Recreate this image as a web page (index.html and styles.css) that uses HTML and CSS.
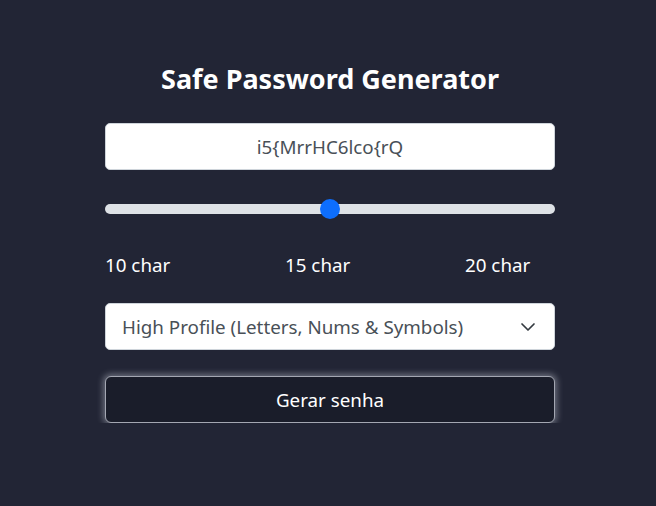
FILE: index.html
```html
<!DOCTYPE html>
<html lang="pt">
<head>
<meta charset="utf-8">
<title>Safe Password Generator</title>
<link rel="stylesheet" href="styles.css">
</head>
<body>
<main class="app">
  <h1 class="title">Safe Password Generator</h1>
  <input class="field password" type="text" value="i5{MrrHC6lco{rQ" readonly>
  <input class="range" type="range" min="10" max="20" value="15">
  <div class="ticks">
    <span>10 char</span>
    <span>15 char</span>
    <span>20 char</span>
  </div>
  <div class="select-wrap">
    <select class="field select">
      <option>High Profile (Letters, Nums &amp; Symbols)</option>
      <option>Medium Profile (Letters &amp; Nums)</option>
      <option>Low Profile (Letters)</option>
    </select>
    <svg class="chevron" width="16" height="16" viewBox="0 0 16 16" aria-hidden="true"><path d="m2 5 6 6 6-6" fill="none" stroke="#343a40" stroke-width="1.7" stroke-linecap="round" stroke-linejoin="round"/></svg>
  </div>
  <button class="btn" type="button">Gerar senha</button>
</main>
</body>
</html>
```
FILE: styles.css
```css
html, body {
  margin: 0;
  padding: 0;
  background: #222535;
  font-family: "Segoe UI", "Noto Sans", "Liberation Sans", sans-serif;
}

.app {
  width: 450px;
  margin-left: 105px;
  padding-top: 63px;
  display: flex;
  flex-direction: column;
}

.title {
  margin: 0;
  color: #ffffff;
  font-size: 27px;
  font-weight: 700;
  line-height: 32px;
  text-align: center;
}

.field {
  box-sizing: border-box;
  width: 100%;
  height: 47px;
  border: 1px solid #ced4da;
  border-radius: 5px;
  background: #ffffff;
  color: #495057;
  font-family: inherit;
  font-size: 18.8px;
  outline: none;
}

.password {
  margin-top: 28px;
  text-align: center;
  padding: 0 16px;
}

.range {
  -webkit-appearance: none;
  appearance: none;
  margin: 29px 0 0;
  width: 100%;
  height: 20px;
  background: transparent;
  padding: 0;
}

.range::-webkit-slider-runnable-track {
  height: 10px;
  border-radius: 5px;
  background: #dee2e6;
}

.range::-webkit-slider-thumb {
  -webkit-appearance: none;
  appearance: none;
  width: 20px;
  height: 20px;
  margin-top: -5px;
  border: 0;
  border-radius: 50%;
  background: #0d6efd;
}

.ticks {
  margin-top: 31px;
  display: grid;
  grid-template-columns: 180px 180px auto;
  color: #ffffff;
  font-size: 18.8px;
  line-height: 30px;
}

.select-wrap {
  position: relative;
  margin-top: 23px;
}

.select {
  -webkit-appearance: none;
  appearance: none;
  padding: 0 48px 0 16px;
}

.chevron {
  position: absolute;
  right: 19px;
  top: 16px;
  pointer-events: none;
}

.btn {
  margin-top: 26px;
  box-sizing: border-box;
  width: 100%;
  height: 47px;
  border: 1px solid #a4a7b2;
  border-radius: 6px;
  background: #1a1d2a;
  color: #ffffff;
  font-family: inherit;
  font-size: 18.8px;
  box-shadow: 0 0 6px 2px rgba(200, 203, 215, 0.45);
  cursor: pointer;
}
```
